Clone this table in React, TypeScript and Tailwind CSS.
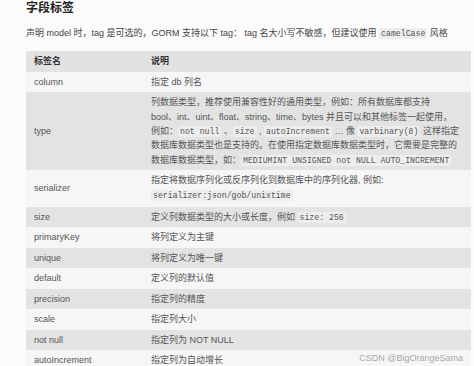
const Code = ({ children }: { children: React.ReactNode }) => (
  <code className="rounded-[2px] bg-[#ededed] px-[2px] py-[1px] font-['Liberation_Mono',monospace] text-[8.2px] leading-none text-[#555]">
    {children}
  </code>
);

type Row = { name: string; desc: React.ReactNode };

const rows: Row[] = [
  { name: "column", desc: "指定 db 列名" },
  {
    name: "type",
    desc: (
      <div className="whitespace-nowrap">
        <div>列数据类型，推荐使用兼容性好的通用类型，例如：所有数据库都支持</div>
        <div>bool、int、uint、float、string、time、bytes 并且可以和其他标签一起使用，</div>
        <div>
          例如：<Code>not null</Code> 、<Code>size</Code> , <Code>autoIncrement</Code> … 像{" "}
          <Code>varbinary(8)</Code> 这样指定
        </div>
        <div>数据库数据类型也是支持的。在使用指定数据库数据类型时，它需要是完整的</div>
        <div>
          数据库数据类型，如：<Code>MEDIUMINT UNSIGNED not NULL AUTO_INCREMENT</Code>
        </div>
      </div>
    ),
  },
  {
    name: "serializer",
    desc: (
      <>
        <div>指定将数据序列化或反序列化到数据库中的序列化器, 例如:</div>
        <div className="pb-[2px]">
          <Code>serializer:json/gob/unixtime</Code>
        </div>
      </>
    ),
  },
  {
    name: "size",
    desc: (
      <>
        定义列数据类型的大小或长度，例如 <Code>size: 256</Code>
      </>
    ),
  },
  { name: "primaryKey", desc: "将列定义为主键" },
  { name: "unique", desc: "将列定义为唯一键" },
  { name: "default", desc: "定义列的默认值" },
  { name: "precision", desc: "指定列的精度" },
  { name: "scale", desc: "指定列大小" },
  { name: "not null", desc: "指定列为 NOT NULL" },
  { name: "autoIncrement", desc: "指定列为自动增长" },
];

export default function App() {
  return (
    <div className="relative h-[366px] w-[474px] overflow-hidden bg-[#fbfbfb] pl-[26px] pr-[3px] font-['Liberation_Sans','Noto_Sans_CJK_SC',sans-serif]">
      {/* Heading */}
      <h2 className="text-[12px] leading-[17px] font-bold text-[#222]">字段标签</h2>
      <p className="mt-[9px] text-[9px] leading-[14.4px] text-[#444]">
        声明 model 时，tag 是可选的，GORM 支持以下 tag： tag 名大小写不敏感，但建议使用{" "}
        <Code>camelCase</Code> 风格
      </p>

      {/* Tag table */}
      <table className="mt-[11px] w-full table-fixed border-collapse text-left text-[9px] leading-[14.4px] text-[#555]">
        <colgroup>
          <col className="w-[117px]" />
          <col />
        </colgroup>
        <thead>
          <tr className="bg-[#e2e2e2]">
            <th className="px-[8px] py-[3px] font-bold text-[#333]">标签名</th>
            <th className="px-[8px] py-[3px] font-bold text-[#333]">说明</th>
          </tr>
        </thead>
        <tbody>
          {rows.map((row, i) => (
            <tr key={row.name} className={i % 2 === 0 ? "bg-[#f6f6f7]" : "bg-[#e3e3e3]"}>
              <td className="px-[8px] py-[3px] align-middle">{row.name}</td>
              <td className="px-[8px] py-[3px] align-middle">{row.desc}</td>
            </tr>
          ))}
        </tbody>
      </table>

      {/* Watermark */}
      <div className="absolute right-[11px] bottom-[2px] text-[9px] leading-[12px] text-[#a8a8a8]">
        CSDN @BigOrangeSama
      </div>
    </div>
  );
}
